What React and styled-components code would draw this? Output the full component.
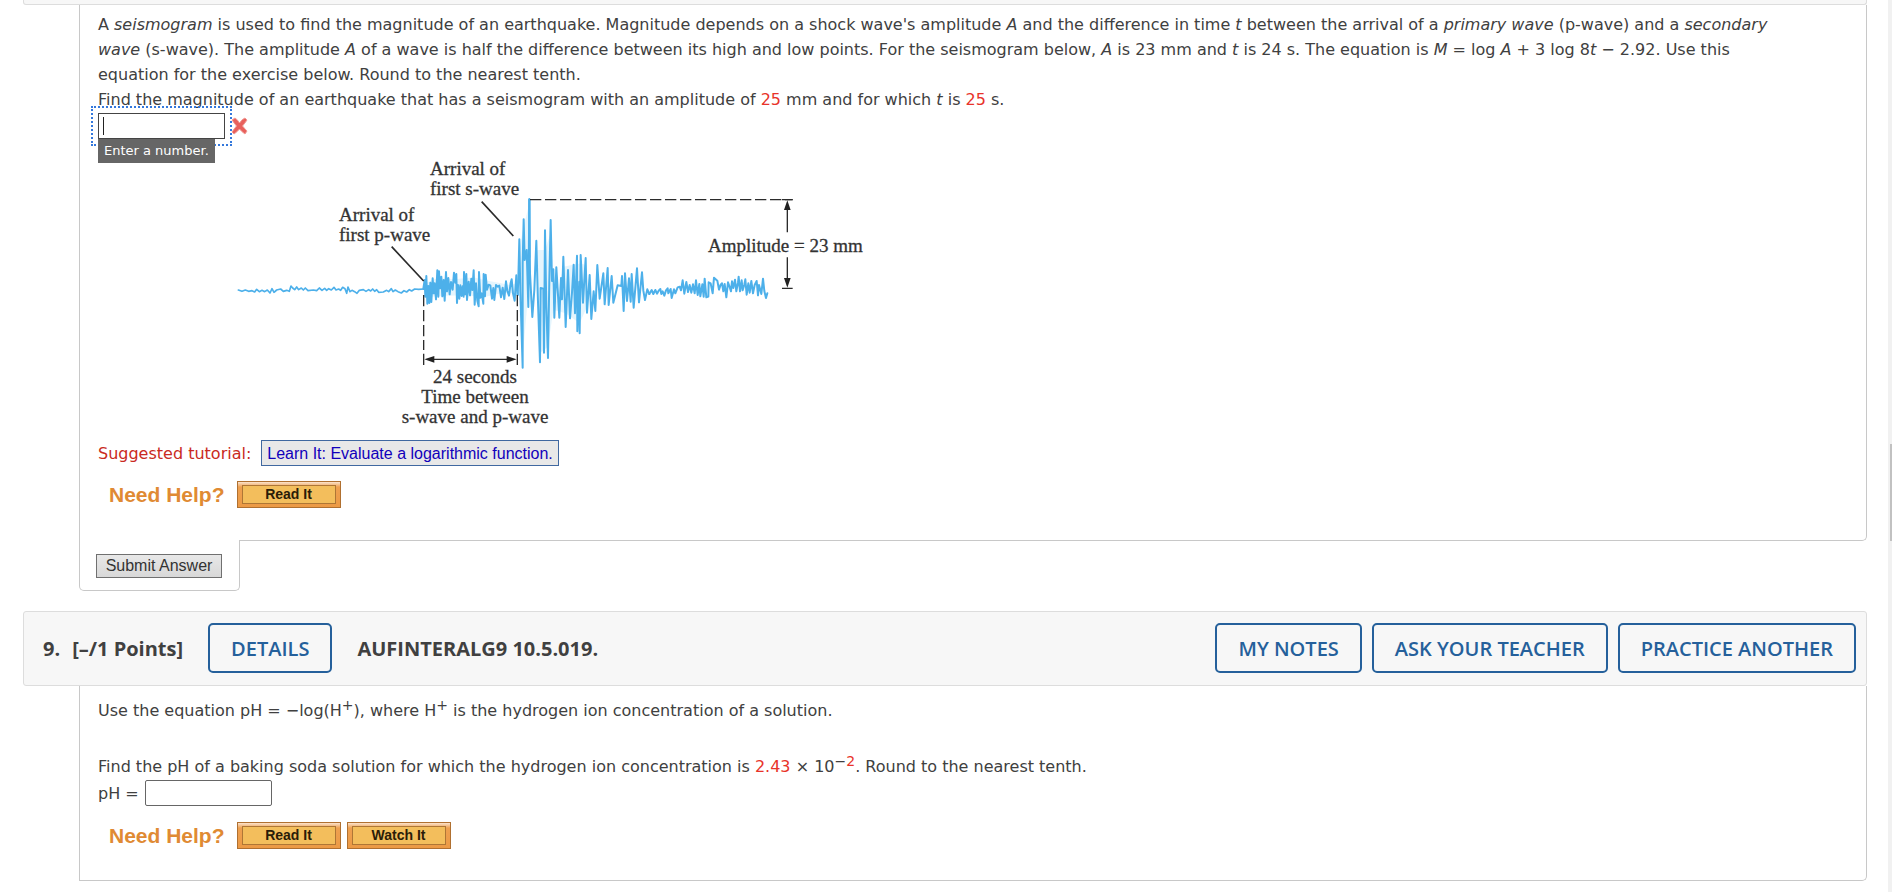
import React from "react";
import styled, { createGlobalStyle, css } from "styled-components";

const GlobalStyle = createGlobalStyle`
  *, *::before, *::after { box-sizing: border-box; }
  body {
    margin: 0;
    background: #fff;
    color: #404040;
    font-family: "DejaVu Sans", sans-serif;
    font-size: 16px;
    line-height: 25px;
  }
`;

const Page = styled.div`
  display: grid;
  grid-template-columns: minmax(0, 1fr) 4px;
  min-height: 100vh;
`;

const Main = styled.main`
  padding: 0 21px 0 23px;
`;

const ScrollTrack = styled.div`
  background: #f1f1f1;
  padding: 444px 0 0 2px;
`;

const ScrollThumb = styled.div`
  height: 97px;
  background: #c1c1c1;
`;

const HeaderEdge = styled.div`
  height: 5px;
  background: #f7f7f7;
  border: 1px solid #ddd;
  border-top: none;
  border-radius: 0 0 3px 3px;
`;

const Header = styled.header`
  display: flex;
  align-items: center;
  min-height: 75px;
  margin-top: 20px;
  padding: 0 10px 1px 19px;
  background: #f7f7f7;
  border: 1px solid #ddd;
  border-radius: 3px;
  font-family: "Open Sans", sans-serif;
  font-size: 20px;
`;

const Heading = styled.h2`
  display: flex;
  gap: 12px;
  margin: 0 25px 0 0;
  font-size: inherit;
  font-weight: 700;
`;

const ExerciseCode = styled.strong`
  margin-left: 25px;
  font-weight: 700;
`;

const Actions = styled.div`
  display: flex;
  gap: 10px;
  margin-left: auto;
`;

const OutlineButton = styled.button`
  height: 50px;
  padding: 0 21px;
  background: transparent;
  border: 2px solid #25609b;
  border-radius: 5px;
  color: #25609b;
  font: 600 20px/25px "Open Sans", sans-serif;
`;

const Body = styled.section`
  margin-left: 56px;
  padding: ${(p) => (p.$first ? "7px 18px 32px" : "12px 18px 31px")};
  border: 1px solid #c8c8c8;
  border-top: none;
  border-radius: 0 0 5px 0;
`;

const Paragraph = styled.p`
  margin: 0;
`;

const Gap = styled.div`
  height: 31px;
`;

const Value = styled.span`
  color: #e8332a;
`;

const Sup = styled.sup`
  font-size: 14px;
  line-height: 0;
`;

const AnswerRow = styled.div`
  display: flex;
  align-items: center;
  gap: 6px;
  min-height: 28px;
`;

const Field = styled.div`
  position: relative;
`;

const AnswerInput = styled.input`
  display: block;
  width: 127px;
  height: 26px;
  padding: 0 4px;
  border: 1px solid #666;
  border-radius: 2px;
  background: #fff;
  font: inherit;
  ${(p) =>
    p.$active &&
    css`
      &, &:focus {
        border-color: #444;
        border-radius: 0;
        outline: 2px dotted #3478dc;
        outline-offset: 5px;
      }
    `}
`;

const Caret = styled.span`
  position: absolute;
  top: 4px;
  left: 5px;
  width: 1px;
  height: 18px;
  background: #222;
`;

const Hint = styled.div`
  position: absolute;
  top: 100%;
  left: 0;
  padding: 0 6px;
  background: #666;
  color: #fff;
  font-size: 13px;
  line-height: 24px;
  white-space: nowrap;
`;

const Figure = styled.figure`
  margin: 10px 0 10px 122px;
  svg { display: block; }
`;

const Tutorial = styled.div`
  display: flex;
  align-items: center;
  gap: 10px;
  color: #c92a22;
`;

const TutorialLink = styled.a`
  padding: 1px 5px 0;
  background: #e8e8e8;
  border: 1px solid #4068a0;
  color: #1100bb;
  font: 16px/23px "Liberation Sans", Arial, sans-serif;
  text-decoration: none;
`;

const HelpRow = styled.div`
  display: flex;
  align-items: center;
  gap: 6px;
  margin: 15px 0 0 11px;
`;

const HelpLabel = styled.span`
  margin-right: 6px;
  color: #e08a33;
  font: bold 21px/25px "Liberation Sans", Arial, sans-serif;
`;

const HelpButton = styled.button`
  width: 104px;
  height: 27px;
  padding: 3px 4px;
  border: 1px solid #b07030;
  background: linear-gradient(#fbe3cd, #eea050 5px, #ec9a45);
  color: #2a1c08;
  font: bold 14px/17px "Liberation Sans", Arial, sans-serif;
  span {
    display: block;
    border: 1px solid #ae7635;
    background: #f3be5c;
  }
`;

const SubmitTab = styled.div`
  width: 161px;
  margin: -1px 0 0 56px;
  padding: 14px 16px 12px;
  background: #fff;
  border: 1px solid #c8c8c8;
  border-top: none;
  border-radius: 0 0 5px 5px;
`;

const SubmitButton = styled.button`
  display: block;
  width: 126px;
  height: 24px;
  padding: 0;
  border: 1px solid #707070;
  background: linear-gradient(#e8e8e8, #d8d8d8);
  color: #333;
  font: 16px/20px "Liberation Sans", Arial, sans-serif;
`;

const quiet =
  "55,420 66,424 76,420 86,424 96,422 104,426 110,418 118,425 126,421 134,425 142,420 150,429 156,416 162,427 170,420 182,417 190,424 200,421 208,424 213,408 218,414 224,419 230,411 236,419 244,414 250,420 256,414 264,422 280,420 290,422 298,414 306,421 314,415 320,421 326,416 334,420 342,412 348,420 356,417 362,421 368,412 375,416 380,430 384,411 390,425 396,421 404,425 411,430 418,421 430,419 438,424 446,419 452,423 458,417 464,424 470,419 476,427 490,426 500,421 506,425 514,416 519,425 526,420 534,425 544,429 552,422 560,426 568,419 575,423 584,417 596,418 610,417";

const pWave =
  "614,390 616,440 619,378 622,461 625,408 628,459 631,398 634,456 638,385 641,430 644,400 648,448 652,361 655,440 657,364 660,415 664,380 667,439 671,390 674,452 678,366 681,424 685,384 689,433 693,396 698,419 702,368 706,398 709,372 711,459 714,405 718,446 721,406 725,438 728,409 731,440 732,366 736,433 739,372 741,450 746,395 750,436 754,386 757,420 761,361 764,464 768,400 772,452 776,469 777,366 781,443 785,430 790,461 791,372 795,439 797,374 801,419 806,404 811,406 816,446 820,414 823,450 828,405 833,410 838,407 843,442 848,413 853,447 858,394 862,423 867,437 872,399 875,388 879,430 884,452 889,376 893,435";

const sWave =
  "895,385 898,268 901,425 908,653 908,340 911,208 914,330 920,300 925,471 928,147 930,370 937,501 943,420 949,272 953,425 960,637 962,414 970,416 972,608 975,241 979,470 984,624 988,390 992,210 996,393 1000,358 1003,503 1009,352 1013,418 1018,503 1023,384 1026,448 1030,320 1034,438 1037,531 1044,360 1050,505 1056,428 1061,344 1065,490 1071,317 1072,544 1078,395 1079,550 1082,315 1089,458 1097,324 1101,488 1109,375 1114,507 1121,424 1126,483 1132,345 1139,446 1150,370 1154,463 1163,354 1166,465 1175,378 1180,458 1193,406 1204,408 1206,378 1211,483 1215,370 1221,453 1227,385 1232,455 1235,372 1241,473 1251,355 1257,457 1266,367 1270,422 1275,450 1282,418 1288,432";

const coda =
  "1288,432 1295,420 1300,432 1306,420 1311,431 1316,422 1321,417 1324,432 1328,424 1333,437 1338,421 1343,415 1345,430 1352,417 1355,444 1362,418 1366,430 1373,412 1379,410 1383,421 1388,391 1393,431 1399,396 1404,426 1409,405 1414,428 1419,403 1424,430 1428,391 1433,435 1438,402 1441,439 1447,403 1451,440 1454,386 1459,442 1465,440 1466,397 1472,400 1478,430 1482,383 1492,392 1497,419 1502,404 1506,400 1510,424 1514,402 1519,442 1524,397 1528,408 1533,424 1536,394 1540,414 1545,389 1549,424 1554,398 1556,380 1560,424 1565,391 1568,421 1573,404 1576,388 1580,434 1585,400 1589,428 1594,393 1599,430 1604,405 1610,393 1614,436 1617,405 1621,420 1624,432 1629,386 1633,423 1638,444 1642,430";

function Seismogram() {
  return (
    <Figure>
      <svg width="648" height="280" viewBox="0 0 648 280" role="img" aria-label="Seismogram with p-wave, s-wave and amplitude">
        <g transform="scale(0.33333)" fill="none" stroke="#4db0ea" strokeWidth="6" strokeLinejoin="round" strokeLinecap="round">
          <path
            d="M614 400L652 385L705 388L761 382L792 390L870 405L893 400V430L850 428L790 442L740 436L650 438L620 444ZM897 300L911 230L928 160L932 440L937 480L925 430L908 620ZM950 300L975 300L992 250L1000 480L984 590L960 610ZM1030 350L1082 340L1097 345L1101 470L1079 520L1037 490L1003 480Z"
            fill="#bfe5fa"
            fillOpacity="0.4"
            stroke="none"
          />
          <polyline points={quiet} strokeWidth="5" />
          <polyline points={`610,417 ${pWave}`} />
          <polyline points={`893,435 ${sWave}`} />
          <path d="M928 150V320" strokeWidth="7" />
          <polyline points={coda} strokeWidth="6" />
        </g>
        <g transform="scale(0.33333)" fill="none" stroke="#2b2b2b" strokeWidth="4">
          <path d="M515 290L611 393M785 155L880 258" strokeWidth="5" />
          <path d="M611 435V600M892 435V600" strokeDasharray="34 11" />
          <path d="M611 611V645M892 611V645M625 628H878" />
          <path d="M930 149H1718" strokeDasharray="34 11" />
          <path d="M1702 170V247M1702 322V400M1686 415H1718M1686 149H1718" />
          <path d="M613 628L643 618V638ZM890 628L860 618V638ZM1702 151L1692 180H1712ZM1702 413L1692 384H1712Z" fill="#222" stroke="none" />
        </g>
        <g fill="#333" stroke="#333" strokeWidth="0.3" fontFamily="Liberation Serif, Times New Roman, serif" fontSize="19">
          <text x="210" y="25">Arrival of</text>
          <text x="210" y="45">first s-wave</text>
          <text x="119" y="71">Arrival of</text>
          <text x="119" y="91">first p-wave</text>
          <text x="488" y="102">Amplitude = 23 mm</text>
          <g textAnchor="middle">
            <text x="255" y="233">24 seconds</text>
            <text x="255" y="253">Time between</text>
            <text x="255" y="273">s-wave and p-wave</text>
          </g>
        </g>
      </svg>
    </Figure>
  );
}

function WrongMark() {
  return (
    <svg width="17" height="18" viewBox="0 0 17 18" role="img" aria-label="Incorrect">
      <path
        d="M1 3L4 1Q7 3 8.500 6Q11 2 14 1L16 3Q14 6 11.500 9Q14 12 16 14L14 17Q11 15 8.500 12Q6 15 3 17L1 15Q3 12 5.500 9Q3 6 1 3Z"
        fill="#e8605c"
        stroke="#f09a94"
        strokeWidth="1"
        strokeLinejoin="round"
      />
    </svg>
  );
}

function NeedHelp({ options }) {
  return (
    <HelpRow>
      <HelpLabel>Need Help?</HelpLabel>
      {options.map((name) => (
        <HelpButton key={name} type="button">
          <span>{name}</span>
        </HelpButton>
      ))}
    </HelpRow>
  );
}

export default function App() {
  return (
    <Page>
      <GlobalStyle />
      <Main>
        <HeaderEdge />
        <Body $first>
          <Paragraph>
            A <i>seismogram</i> is used to find the magnitude of an earthquake. Magnitude depends on a shock wave's
            amplitude <i>A</i> and the difference in time <i>t</i> between the arrival of a <i>primary wave</i> (p-wave)
            and a <i>secondary</i>
            <br />
            <i>wave</i> (s-wave). The amplitude <i>A</i> of a wave is half the difference between its high and low
            points. For the seismogram below, <i>A</i> is 23 mm and <i>t</i> is 24 s. The equation is <i>M</i> = log{" "}
            <i>A</i> + 3 log 8<i>t</i> − 2.92. Use this
            <br />
            equation for the exercise below. Round to the nearest tenth.
          </Paragraph>
          <Paragraph>
            Find the magnitude of an earthquake that has a seismogram with an amplitude of <Value>25</Value> mm and for
            which <i>t</i> is <Value>25</Value> s.
          </Paragraph>
          <AnswerRow>
            <Field>
              <AnswerInput $active type="text" aria-label="Magnitude" aria-describedby="magnitude-hint" />
              <Caret />
              <Hint id="magnitude-hint">Enter a number.</Hint>
            </Field>
            <WrongMark />
          </AnswerRow>
          <Seismogram />
          <Tutorial>
            Suggested tutorial:
            <TutorialLink href="#tutorial">Learn It: Evaluate a logarithmic function.</TutorialLink>
          </Tutorial>
          <NeedHelp options={["Read It"]} />
        </Body>
        <SubmitTab>
          <SubmitButton type="button">Submit Answer</SubmitButton>
        </SubmitTab>

        <Header>
          <Heading>
            <span>9.</span>
            <span>[–/1 Points]</span>
          </Heading>
          <OutlineButton type="button">DETAILS</OutlineButton>
          <ExerciseCode>AUFINTERALG9 10.5.019.</ExerciseCode>
          <Actions>
            <OutlineButton type="button">MY NOTES</OutlineButton>
            <OutlineButton type="button">ASK YOUR TEACHER</OutlineButton>
            <OutlineButton type="button">PRACTICE ANOTHER</OutlineButton>
          </Actions>
        </Header>
        <Body>
          <Paragraph>
            Use the equation pH = −log(H<Sup>+</Sup>), where H<Sup>+</Sup> is the hydrogen ion concentration of a
            solution.
          </Paragraph>
          <Gap />
          <Paragraph>
            Find the pH of a baking soda solution for which the hydrogen ion concentration is <Value>2.43</Value> × 10
            <Sup>
              −<Value>2</Value>
            </Sup>
            . Round to the nearest tenth.
          </Paragraph>
          <AnswerRow>
            <label htmlFor="ph">pH =</label>
            <AnswerInput id="ph" type="text" />
          </AnswerRow>
          <NeedHelp options={["Read It", "Watch It"]} />
        </Body>
      </Main>
      <ScrollTrack>
        <ScrollThumb />
      </ScrollTrack>
    </Page>
  );
}
